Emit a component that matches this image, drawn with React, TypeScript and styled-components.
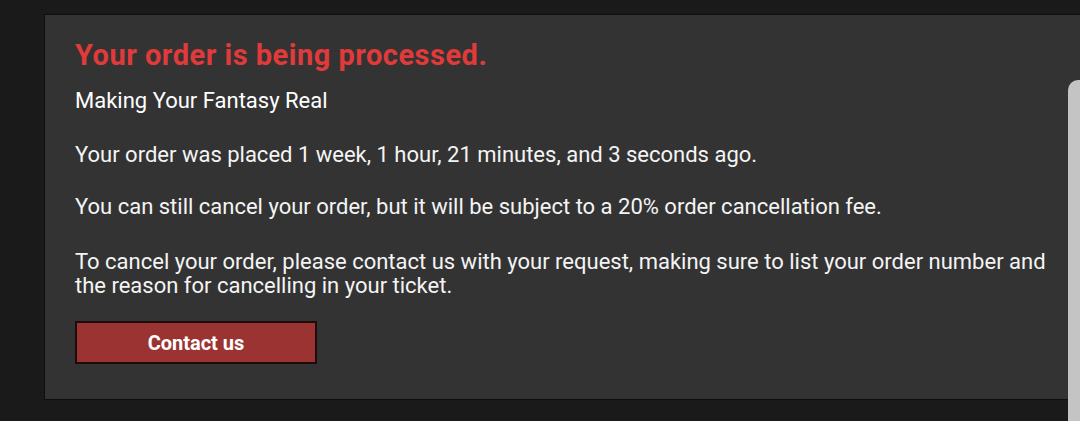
import React from 'react';
import styled, { createGlobalStyle } from 'styled-components';

const GlobalStyle = createGlobalStyle`
    html, body {
        margin: 0;
        padding: 0;
        background-color: #1a1a1a;
        overflow: hidden;
    }

    body {
        font-family: Roboto, 'Liberation Sans', sans-serif;
        color: #f4f4f4;
    }
`;

const Page = styled.main`
    padding: 14px 0 0 44px;
    min-height: 421px;
    box-sizing: border-box;
`;

const Card = styled.section`
    margin-right: -60px;
    background-color: #333333;
    border: 1px solid #0e0e0e;
    padding: 25px 30px 35px;
`;

const Title = styled.h1`
    margin: 0;
    font-size: 29px;
    line-height: 30px;
    letter-spacing: 0.5px;
    font-weight: 700;
    color: #e03a3a;
`;

const Subtitle = styled.h2`
    margin: 19px 0 0;
    font-size: 22px;
    line-height: 24px;
    font-weight: 400;
    color: #ffffff;
`;

const Paragraph = styled.p<{ $gap: number }>`
    margin: ${p => p.$gap}px 0 0;
    max-width: 990px;
    font-size: 22px;
    line-height: 24px;
    color: #f4f4f4;
`;

const ContactButton = styled.button`
    display: block;
    margin-top: 23px;
    width: 242px;
    height: 43px;
    background-color: #9b3333;
    border: 2px solid #1c0c0c;
    color: #ffffff;
    font-family: Roboto, 'Liberation Sans', sans-serif;
    font-size: 20px;
    font-weight: 700;
    cursor: pointer;
`;

// light rounded strip lying over the right edge of the page
const EdgeHandle = styled.div`
    position: fixed;
    top: 80px;
    right: 0;
    bottom: 0;
    width: 12px;
    background-color: #c4c4c4;
    border-top-left-radius: 10px;
`;

export default function App() {
    return (
        <>
            <GlobalStyle />
            <Page>
                <Card>
                    <Title>Your order is being processed.</Title>
                    <Subtitle>Making Your Fantasy Real</Subtitle>
                    <Paragraph $gap={30}>
                        Your order was placed 1 week, 1 hour, 21 minutes, and 3 seconds ago.
                    </Paragraph>
                    <Paragraph $gap={28}>
                        You can still cancel your order, but it will be subject to a 20% order
                        cancellation fee.
                    </Paragraph>
                    <Paragraph $gap={31}>
                        To cancel your order, please contact us with your request, making sure to
                        list your order number and the reason for cancelling in your ticket.
                    </Paragraph>
                    <ContactButton>Contact us</ContactButton>
                </Card>
            </Page>
            <EdgeHandle />
        </>
    );
}
